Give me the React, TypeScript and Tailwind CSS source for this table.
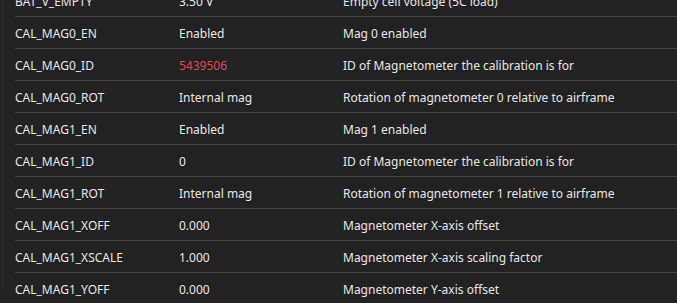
import React from 'react';

type Param = { name: string; value: string; desc: string; changed?: boolean };

const params: Param[] = [
  { name: 'BAT_V_EMPTY', value: '3.50 V', desc: 'Empty cell voltage (5C load)' },
  { name: 'CAL_MAG0_EN', value: 'Enabled', desc: 'Mag 0 enabled' },
  { name: 'CAL_MAG0_ID', value: '5439506', desc: 'ID of Magnetometer the calibration is for', changed: true },
  { name: 'CAL_MAG0_ROT', value: 'Internal mag', desc: 'Rotation of magnetometer 0 relative to airframe' },
  { name: 'CAL_MAG1_EN', value: 'Enabled', desc: 'Mag 1 enabled' },
  { name: 'CAL_MAG1_ID', value: '0', desc: 'ID of Magnetometer the calibration is for' },
  { name: 'CAL_MAG1_ROT', value: 'Internal mag', desc: 'Rotation of magnetometer 1 relative to airframe' },
  { name: 'CAL_MAG1_XOFF', value: '0.000', desc: 'Magnetometer X-axis offset' },
  { name: 'CAL_MAG1_XSCALE', value: '1.000', desc: 'Magnetometer X-axis scaling factor' },
  { name: 'CAL_MAG1_YOFF', value: '0.000', desc: 'Magnetometer Y-axis offset' },
];

export default function App() {
  return (
    <div
      className="h-[303px] w-[677px] overflow-hidden bg-[#222222] text-[12px] text-[#e6e6e6]"
      style={{ fontFamily: '"Noto Sans", "Open Sans", sans-serif' }}
    >
      <div className="ml-[2px] h-full border-l border-[#2e2e2e] pl-[12px]">
        {/* list is scrolled so the first row is half hidden */}
        <div className="-mt-[15px]">
          {params.map((p) => (
            <div key={p.name} className="flex h-[32px] items-center border-b border-[#444444] pt-[2px]">
              <div className="w-[164px] shrink-0">{p.name}</div>
              <div className={`w-[164px] shrink-0 ${p.changed ? 'text-[#e5484f]' : ''}`}>{p.value}</div>
              <div className="flex-1 truncate">{p.desc}</div>
            </div>
          ))}
        </div>
      </div>
    </div>
  );
}
